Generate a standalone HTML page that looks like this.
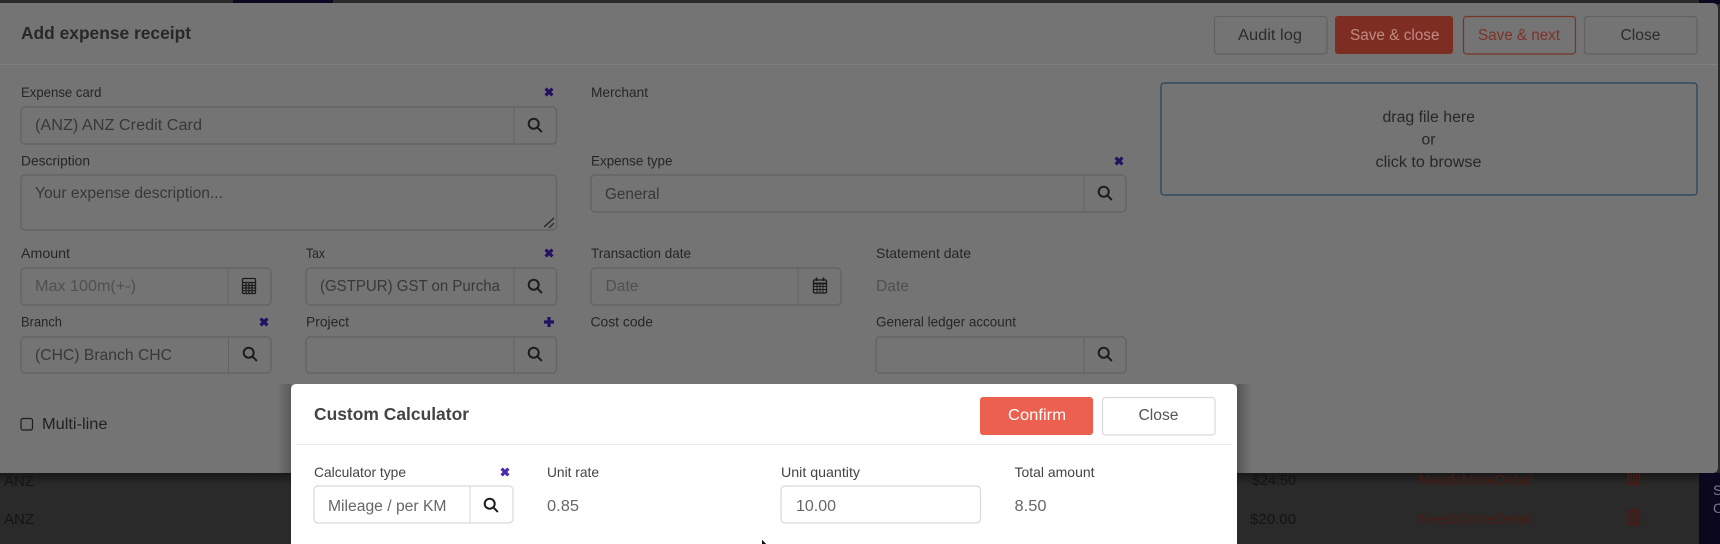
<!DOCTYPE html>
<html><head><meta charset="utf-8"><title>Add expense receipt</title>
<style>
html,body{margin:0;padding:0;width:1720px;height:544px;overflow:hidden;background:#2a2a2a}
svg{display:block}
text{font-family:"Liberation Sans",sans-serif}
.l{font-size:14px;fill:#262626}
.i{font-size:15.5px;fill:#383838}
.p{font-size:15.5px;fill:#505050}
.ib{fill:none;stroke:#626262;stroke-width:1.2}
.dv{stroke:#626262;stroke-width:1}
.w{font-size:14px;fill:#444}
.wi{font-size:15.5px;fill:#666}
.wb{fill:#fff;stroke:#d9d9d9;stroke-width:1.2}
.x{stroke:#221160;stroke-width:3.2;fill:none}
.x2{stroke:#4a27b0;stroke-width:3.2;fill:none}
.s{fill:none;stroke:#1c1c1c;stroke-width:2}
</style></head><body>
<svg width="1720" height="544" viewBox="0 0 1720 544" xmlns="http://www.w3.org/2000/svg">
<defs>
<linearGradient id="g" x1="0" y1="0" x2="0" y2="1"><stop offset="0" stop-color="#181818"/><stop offset="1" stop-color="#2a2a2a"/></linearGradient>
<linearGradient id="h" x1="0" y1="0" x2="1" y2="0"><stop offset="0" stop-color="#000" stop-opacity=".28"/><stop offset="1" stop-color="#000" stop-opacity="0"/></linearGradient>
<linearGradient id="h2" x1="1" y1="0" x2="0" y2="0"><stop offset="0" stop-color="#000" stop-opacity=".22"/><stop offset="1" stop-color="#000" stop-opacity="0"/></linearGradient>
<g id="sr"><circle cx="-1.3" cy="-1.3" r="5" class="s"/><path d="M2.3 2.3L6.3 6.4" class="s" stroke-linecap="round" stroke-width="2.4"/></g>
<g id="xm"><path d="M-3.4 -3.4L3.4 3.4M3.4 -3.4L-3.4 3.4" class="x"/></g>
<g id="tr" fill="none" stroke="#481a12"><path d="M-6.5 -5H6.5" stroke-width="2"/><path d="M-2.5 -5.5V-7.5H2.5V-5.5" stroke-width="1.4"/><path d="M-5.5 -4V7.5H5.5V-4" stroke-width="1.4"/><path d="M-2.5 -3V6.5M0 -3V6.5M2.5 -3V6.5" stroke-width="1.3"/></g>
</defs>
<rect width="1720" height="544" fill="#2a2a2a"/>
<rect x="0" y="0" width="1720" height="4" fill="#2a2a2a"/>
<rect x="233" y="0" width="100" height="3" fill="#0b0824"/>
<rect x="1699" y="473" width="21" height="71" fill="#0a071e"/>
<rect x="1699" y="0" width="21" height="4" fill="#0a071e"/>
<rect x="0" y="473" width="1699" height="12" fill="url(#g)"/>
<text x="1713" y="495" font-size="14" fill="#7c7c8a">S</text>
<text x="1713" y="513" font-size="14" fill="#7c7c8a">O</text>
<text x="4" y="486" font-size="15" fill="#141414" textLength="30" lengthAdjust="spacingAndGlyphs">ANZ</text>
<text x="4" y="524" font-size="15" fill="#141414" textLength="30" lengthAdjust="spacingAndGlyphs">ANZ</text>
<text x="1252" y="485" font-size="15" fill="#141414" textLength="44" lengthAdjust="spacingAndGlyphs">$24.50</text>
<text x="1250" y="524" font-size="15" fill="#141414" textLength="46" lengthAdjust="spacingAndGlyphs">$20.00</text>
<text x="1419" y="485" font-size="15" fill="#481c12" textLength="114" lengthAdjust="spacingAndGlyphs">NeedsMoreDetail</text>
<text x="1419" y="524" font-size="15" fill="#481c12" textLength="114" lengthAdjust="spacingAndGlyphs">NeedsMoreDetail</text>
<use href="#tr" x="1634" y="477"/>
<use href="#tr" x="1634" y="517"/>

<!-- Outer modal -->
<rect x="-6" y="3" width="1724" height="470" rx="5" fill="#747474"/>
<rect x="0" y="64" width="1718" height="1" fill="#808080"/>
<text x="21" y="39" font-size="17.5" font-weight="700" fill="#282828" textLength="170" lengthAdjust="spacingAndGlyphs">Add expense receipt</text>

<!-- Header buttons -->
<rect x="1214.5" y="16.5" width="112.5" height="37.5" rx="3" class="ib"/>
<text x="1238" y="40" font-size="15.5" fill="#2c2c2c" textLength="64" lengthAdjust="spacingAndGlyphs">Audit log</text>
<rect x="1335" y="16" width="118" height="38" rx="3" fill="#7e2d22"/>
<text x="1350" y="40" font-size="15.5" fill="#c08a80" textLength="89.5" lengthAdjust="spacingAndGlyphs">Save &amp; close</text>
<rect x="1463.5" y="16.5" width="112" height="37.5" rx="3" fill="none" stroke="#7a3229" stroke-width="1.2"/>
<text x="1478" y="40" font-size="15.5" fill="#7e3228" textLength="82" lengthAdjust="spacingAndGlyphs">Save &amp; next</text>
<rect x="1584.5" y="16.5" width="112.5" height="37.5" rx="3" class="ib"/>
<text x="1620.5" y="40" font-size="15.5" fill="#2c2c2c" textLength="40" lengthAdjust="spacingAndGlyphs">Close</text>

<!-- Dropzone -->
<rect x="1161" y="83" width="536" height="112" rx="3" fill="none" stroke="#264258" stroke-width="1.2"/>
<text x="1382.5" y="122" font-size="15.5" fill="#282828" textLength="92.5" lengthAdjust="spacingAndGlyphs">drag file here</text>
<text x="1421.5" y="144.5" font-size="15.5" fill="#282828" textLength="14" lengthAdjust="spacingAndGlyphs">or</text>
<text x="1375.5" y="167" font-size="15.5" fill="#282828" textLength="106" lengthAdjust="spacingAndGlyphs">click to browse</text>

<!-- Expense card -->
<text x="21" y="97" class="l" textLength="80.5" lengthAdjust="spacingAndGlyphs">Expense card</text>
<use href="#xm" x="549" y="92"/>
<rect x="21" y="107" width="535.5" height="37" rx="4" class="ib"/><path d="M514 107V144" class="dv"/>
<text x="35" y="130" class="i" textLength="167" lengthAdjust="spacingAndGlyphs">(ANZ) ANZ Credit Card</text>
<use href="#sr" x="535" y="125"/>

<!-- Merchant -->
<text x="591" y="97" class="l" textLength="57" lengthAdjust="spacingAndGlyphs">Merchant</text>

<!-- Description -->
<text x="21" y="165.5" class="l" textLength="69" lengthAdjust="spacingAndGlyphs">Description</text>
<rect x="21" y="175" width="535.5" height="55" rx="4" class="ib"/>
<text x="35" y="198" class="i" textLength="188" lengthAdjust="spacingAndGlyphs">Your expense description...</text>
<path d="M544 227L554 218M549 228L554 223" stroke="#222" stroke-width="1.2" fill="none"/>

<!-- Expense type -->
<text x="591" y="165.5" class="l" textLength="81.5" lengthAdjust="spacingAndGlyphs">Expense type</text>
<use href="#xm" x="1119" y="161"/>
<rect x="591" y="175" width="535" height="37" rx="4" class="ib"/><path d="M1084 175V212" class="dv"/>
<text x="605" y="199" class="i" textLength="54.5" lengthAdjust="spacingAndGlyphs">General</text>
<use href="#sr" x="1105" y="193"/>

<!-- Amount -->
<text x="21" y="258" class="l" textLength="49" lengthAdjust="spacingAndGlyphs">Amount</text>
<rect x="21" y="268" width="250" height="37" rx="4" class="ib"/><path d="M228 268V305" class="dv"/>
<text x="35" y="291" class="p" textLength="101" lengthAdjust="spacingAndGlyphs">Max 100m(+-)</text>
<g fill="none" stroke="#1c1c1c">
<rect x="242.5" y="278.5" width="13" height="15" rx="1" stroke-width="1.3"/>
<path d="M243 282.5H255" stroke-width="1.3"/>
<path d="M243 285.5H255M243 288H255M243 290.7H255M246 283V293M249 283V293M252 283V293" stroke-width="1.2"/>
</g>

<!-- Tax -->
<text x="306" y="258" class="l" textLength="19" lengthAdjust="spacingAndGlyphs">Tax</text>
<use href="#xm" x="549" y="253"/>
<rect x="306" y="268" width="250.5" height="37" rx="4" class="ib"/><path d="M514 268V305" class="dv"/>
<text x="320" y="291" class="i" textLength="180" lengthAdjust="spacingAndGlyphs">(GSTPUR) GST on Purcha</text>
<use href="#sr" x="535" y="286"/>

<!-- Transaction date -->
<text x="591" y="258" class="l" textLength="100" lengthAdjust="spacingAndGlyphs">Transaction date</text>
<rect x="591" y="268" width="250" height="37" rx="4" class="ib"/><path d="M798 268V305" class="dv"/>
<text x="605.5" y="291" class="p" textLength="33" lengthAdjust="spacingAndGlyphs">Date</text>
<g fill="none" stroke="#1c1c1c">
<rect x="813.5" y="280" width="13" height="13" rx="1" stroke-width="1.3"/>
<path d="M814 283.5H826" stroke-width="2"/>
<path d="M816.5 277.5V281M823.5 277.5V281" stroke-width="1.8"/>
<path d="M814 286.5H826M814 289.5H826M817 284V293M820 284V293M823 284V293" stroke-width="1"/>
</g>

<!-- Statement date -->
<text x="876" y="258" class="l" textLength="95" lengthAdjust="spacingAndGlyphs">Statement date</text>
<text x="876" y="291" class="p" textLength="33" lengthAdjust="spacingAndGlyphs">Date</text>

<!-- Branch -->
<text x="21" y="326.5" class="l" textLength="41" lengthAdjust="spacingAndGlyphs">Branch</text>
<use href="#xm" x="264" y="322"/>
<rect x="21" y="337" width="250" height="36" rx="4" class="ib"/><path d="M228.5 337V373" class="dv"/>
<text x="35" y="360" class="i" textLength="137" lengthAdjust="spacingAndGlyphs">(CHC) Branch CHC</text>
<use href="#sr" x="250" y="354"/>

<!-- Project -->
<text x="306" y="326.5" class="l" textLength="43" lengthAdjust="spacingAndGlyphs">Project</text>
<path d="M549 317V327M544 322H554" class="x"/>
<rect x="306" y="337" width="250.5" height="36" rx="4" class="ib"/><path d="M514 337V373" class="dv"/>
<use href="#sr" x="535" y="354"/>

<!-- Cost code / GL -->
<text x="590.5" y="326.5" class="l" textLength="62.5" lengthAdjust="spacingAndGlyphs">Cost code</text>
<text x="876" y="326.5" class="l" textLength="140" lengthAdjust="spacingAndGlyphs">General ledger account</text>
<rect x="876" y="337" width="250" height="36" rx="4" class="ib"/><path d="M1084 337V373" class="dv"/>
<use href="#sr" x="1105" y="354"/>

<!-- Multi-line -->
<rect x="21" y="418.5" width="11.5" height="11.5" rx="2" fill="none" stroke="#1c1c1c" stroke-width="1.2"/>
<text x="42" y="429" font-size="15.5" fill="#222" textLength="65.5" lengthAdjust="spacingAndGlyphs">Multi-line</text>

<!-- Custom modal shadow -->
<rect x="1237" y="384" width="14" height="89" fill="url(#h)"/>
<rect x="277" y="384" width="14" height="89" fill="url(#h2)"/>

<!-- Custom modal -->
<rect x="291" y="384" width="946" height="170" rx="5" fill="#fff"/>
<rect x="296" y="444" width="936" height="1" fill="#ececec"/>
<text x="314" y="420" font-size="17.5" font-weight="700" fill="#444" textLength="155" lengthAdjust="spacingAndGlyphs">Custom Calculator</text>
<rect x="980" y="397" width="113" height="38" rx="3" fill="#ec6050"/>
<text x="1008" y="420" font-size="15.5" fill="#fff" textLength="58" lengthAdjust="spacingAndGlyphs">Confirm</text>
<rect x="1102.5" y="397.5" width="112.5" height="37.5" rx="3" class="wb"/>
<text x="1138.5" y="420" font-size="15.5" fill="#555" textLength="40" lengthAdjust="spacingAndGlyphs">Close</text>

<text x="314" y="477" class="w" textLength="92" lengthAdjust="spacingAndGlyphs">Calculator type</text>
<path d="M501.6 468.6L508.4 475.4M508.4 468.6L501.6 475.4" class="x2"/>
<rect x="314" y="486" width="199" height="37" rx="4" class="wb"/><path d="M470 486V523" stroke="#d9d9d9"/>
<text x="328" y="511" class="wi" textLength="118.5" lengthAdjust="spacingAndGlyphs">Mileage / per KM</text>
<use href="#sr" x="491" y="505"/>

<text x="547" y="477" class="w" textLength="52" lengthAdjust="spacingAndGlyphs">Unit rate</text>
<text x="547" y="511" class="wi" textLength="32" lengthAdjust="spacingAndGlyphs">0.85</text>

<text x="781" y="477" class="w" textLength="79" lengthAdjust="spacingAndGlyphs">Unit quantity</text>
<rect x="781" y="486" width="199.5" height="37" rx="4" class="wb"/>
<text x="796" y="511" class="wi" textLength="40" lengthAdjust="spacingAndGlyphs">10.00</text>

<text x="1014.5" y="477" class="w" textLength="80" lengthAdjust="spacingAndGlyphs">Total amount</text>
<text x="1014.5" y="511" class="wi" textLength="32" lengthAdjust="spacingAndGlyphs">8.50</text>

<path d="M762.5 541V545L765.5 544Z" fill="#111" stroke="#111" stroke-width="1"/>
</svg>
</body></html>
